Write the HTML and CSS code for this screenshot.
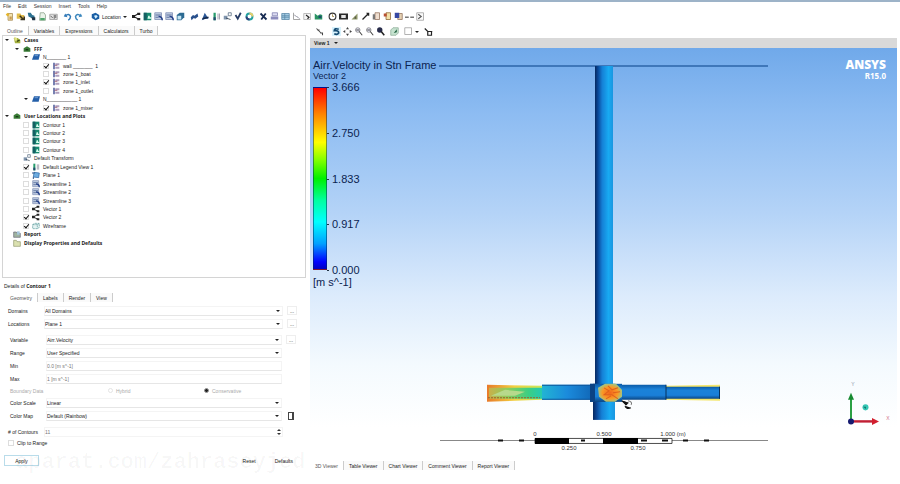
FILE: index.html
```html
<!DOCTYPE html>
<html lang="en">

<head>
    <meta charset="UTF-8">
    <meta name="viewport" content="width=device-width, initial-scale=1.0">
    <title>CFD-Post</title>
    <link rel="stylesheet" href="styles.css">
</head>

<body>
    <!-- Shared icons -->
    <svg class="sprite" aria-hidden="true">
        <symbol id="i-new" viewBox="0 0 12 12"><path d="M4 2h6v9H4z" fill="#f3e3b0" stroke="#a58a52"/><path d="M1 3l3-2 2 3-3 2z" fill="#e5b52c"/><path d="M6 6h3v4H6z" fill="#c99a52"/></symbol>
        <symbol id="i-open" viewBox="0 0 12 12"><path d="M1 2h5l1 2h4v5H1z" fill="#e2bd4c"/><path d="M5 5l5 5M6 10h5V6" stroke="#3b3420" stroke-width="2" fill="none"/></symbol>
        <symbol id="i-load" viewBox="0 0 12 12"><path d="M1 1h4l2 3 3 1v3H6L2 6z" fill="#2d7292"/><path d="M6 7h5v4H7z" fill="#1f3345"/></symbol>
        <symbol id="i-page" viewBox="0 0 12 12"><path d="M3 1h5l2 3v7H2z" fill="#e9f2e8" stroke="#8ba08b"/><path d="M3 8h6v3H3z" fill="#4fa66b"/></symbol>
        <symbol id="i-mail" viewBox="0 0 12 12"><path d="M1 3h10v7H1z" fill="#e0e0e0" stroke="#999"/><path d="M2 5l3 3M7 4v5M9 4v4" stroke="#444"/></symbol>
        <symbol id="i-undo" viewBox="0 0 12 12"><path d="M3 5q5-4 7 1q0 3-3 5" fill="none" stroke="#2f78b7" stroke-width="2"/><path d="M1 6l5 1-3-5z" fill="#2f78b7"/></symbol>
        <symbol id="i-redo" viewBox="0 0 12 12"><path d="M9 5q-5-4-7 1q0 3 3 5" fill="none" stroke="#3a86bd" stroke-width="2"/><path d="M11 6l-5 1 3-5z" fill="#3a86bd"/></symbol>
        <symbol id="i-location" viewBox="0 0 12 12"><path d="M1 3l5-2 5 3v5l-5 2-5-3z" fill="#1b5fa5"/><path d="M4 5l3-1 2 2-3 3z" fill="#d4efff"/></symbol>
        <symbol id="i-vector" viewBox="0 0 12 12"><path d="M2 6l7-4M2 6l8 4" stroke="#222" stroke-width="1.4"/><path d="M0 4h4v4H0zM7 1h4v3H7zM7 8h4v3H7z" fill="#222"/></symbol>
        <symbol id="i-contour" viewBox="0 0 12 12"><path d="M1 1h10v10H1z" fill="#198a70"/><path d="M1 1h4v10H1z" fill="#155f63"/><path d="M7 5h2v2h2v2H6z" fill="#d8fff0"/></symbol>
        <symbol id="i-stream" viewBox="0 0 12 12"><path d="M1 1h9v9H1z" fill="#c3cfe4" stroke="#7a8ab0"/><path d="M2 4h7M2 7h4" stroke="#3e5487"/><path d="M6 6q5 0 5 5" fill="none" stroke="#27428a" stroke-width="2"/></symbol>
        <symbol id="i-volume" viewBox="0 0 12 12"><path d="M1 4l4-3h6v6l-4 4H1z" fill="#2c6a92"/><path d="M2 5h5v5H2z" fill="#c5e5f3"/></symbol>
        <symbol id="i-text" viewBox="0 0 12 12"><path d="M1 7l3-3 2 1 4-3 1 4-4 3-2-1-3 3z" fill="#28508c"/></symbol>
        <symbol id="i-coord" viewBox="0 0 12 12"><path d="M5 1l5 8-4 0-5 2z" fill="#2a5796"/><path d="M2 9l8-2" stroke="#14284a" stroke-width="2"/></symbol>
        <symbol id="i-legend" viewBox="0 0 12 12"><path d="M2 1h3v10H2z" fill="#289d6d"/><path d="M2 7h3v4H2z" fill="#23476e"/><path d="M8 2v8M10 2v8" stroke="#889"/></symbol>
        <symbol id="i-transform" viewBox="0 0 12 12"><path d="M1 5h5v5H1z" fill="#8095ad"/><path d="M7 1h4v4H7z" fill="none" stroke="#52667c"/><path d="M4 8l6 2" stroke="#234"/></symbol>
        <symbol id="i-check" viewBox="0 0 12 12"><path d="M2 4l3 5 4-8" fill="none" stroke="#263b63" stroke-width="2.4"/></symbol>
        <symbol id="i-color" viewBox="0 0 12 12"><circle cx="6" cy="6" r="4" fill="none" stroke="#22a0a0" stroke-width="2.5"/><path d="M6 2a4 4 0 0 1 4 4" fill="none" stroke="#e8d06b" stroke-width="2.5"/><path d="M2 6a4 4 0 0 0 4 4" fill="none" stroke="#31407b" stroke-width="2.5"/></symbol>
        <symbol id="i-cross" viewBox="0 0 12 12"><path d="M2 2l8 8M9 2l-6 8" stroke="#182c52" stroke-width="2.4"/></symbol>
        <symbol id="i-print" viewBox="0 0 12 12"><path d="M3 1h7v4H3z" fill="#dcdcf1" stroke="#7d7dad"/><path d="M1 6h10v4H1z" fill="#8d8dbd"/></symbol>
        <symbol id="i-table" viewBox="0 0 12 12"><path d="M1 2h10v8H1z" fill="#a5cce3" stroke="#5886a5"/><path d="M1 5h10M1 7h10M5 2v8" stroke="#5886a5"/></symbol>
        <symbol id="i-chart" viewBox="0 0 12 12"><path d="M2 1v9h9" fill="none" stroke="#888"/><path d="M3 4l3 2 2 1 2 2" fill="none" stroke="#778"/></symbol>
        <symbol id="i-note" viewBox="0 0 12 12"><path d="M1 2h9v8H1z" fill="#f4f4f4" stroke="#aaa"/><path d="M4 4l4 3-2 2" fill="none" stroke="#222" stroke-width="1.5"/></symbol>
        <symbol id="i-figure" viewBox="0 0 12 12"><path d="M1 2l4 3 3-2 3 1v6H1z" fill="#2b9564"/><path d="M6 5h4v3H6z" fill="#1c4e6b"/></symbol>
        <symbol id="i-clock" viewBox="0 0 12 12"><circle cx="6" cy="6" r="4.5" fill="#fff" stroke="#333" stroke-width="1.5"/><path d="M6 3v3h2" stroke="#997b2f" fill="none"/></symbol>
        <symbol id="i-film" viewBox="0 0 12 12"><path d="M0 2h12v8H0z" fill="#2b2b2b"/><path d="M3 4h6v4H3z" fill="#e9e9e9"/></symbol>
        <symbol id="i-ruler" viewBox="0 0 12 12"><path d="M2 10h8V2z" fill="#8e9668"/><path d="M7 6v3" stroke="#333"/></symbol>
        <symbol id="i-probe" viewBox="0 0 12 12"><path d="M2 10l7-7" stroke="#222" stroke-width="1.6"/><path d="M7 1h4v4H9z" fill="#222"/></symbol>
        <symbol id="i-case-a" viewBox="0 0 12 12"><path d="M4 1h6v9H4z" fill="#f0dfd0" stroke="#906f5a"/><path d="M1 3h3v7H1z" fill="#777"/></symbol>
        <symbol id="i-case-b" viewBox="0 0 12 12"><path d="M4 1h6v9H4z" fill="#f2e0a8" stroke="#8b6430"/><path d="M1 2h4v4H1z" fill="#b85032"/></symbol>
        <symbol id="i-case-c" viewBox="0 0 12 12"><path d="M5 2h6v8H5z" fill="#e4d1b2" stroke="#906f5a"/><path d="M1 1h6v7H1z" fill="#3547a3"/></symbol>
        <symbol id="i-link" viewBox="0 0 12 12"><path d="M0 6h5v2H0zM7 6h5v2H7z" fill="#777"/></symbol>
        <symbol id="i-script" viewBox="0 0 12 12"><path d="M1 1h9v10H1z" fill="#fafafa" stroke="#999"/><path d="M3 3l4 3-4 3" fill="none" stroke="#555" stroke-width="1.4"/></symbol>
        <symbol id="i-pick" viewBox="0 0 12 12"><path d="M2 2l6 6M3 4h3M7 8h3v3" fill="none" stroke="#444" stroke-width="1.4"/></symbol>
        <symbol id="i-rotate" viewBox="0 0 12 12"><rect width="12" height="12" fill="#d9f2fc"/><path d="M9 3q-6-2-6 2q6-1 6 3q-2 3-6 1" fill="none" stroke="#174d74" stroke-width="2.2"/></symbol>
        <symbol id="i-pan" viewBox="0 0 12 12"><path d="M6 0l2 3H4zM6 12l2-3H4zM0 6l3-2v4zM12 6L9 4v4z" fill="#444"/></symbol>
        <symbol id="i-zoom" viewBox="0 0 12 12"><circle cx="5" cy="4" r="3" fill="#eef" stroke="#777"/><path d="M3 4h4M7 6l4 5" stroke="#444" stroke-width="1.4"/></symbol>
        <symbol id="i-fit" viewBox="0 0 12 12"><circle cx="5" cy="4" r="3.6" fill="#272b4a"/><path d="M7 6l4 5" stroke="#222" stroke-width="2"/></symbol>
        <symbol id="i-high" viewBox="0 0 12 12"><path d="M1 4l3-3h7v7l-3 3H1z" fill="#c6e2cf" stroke="#8bab96"/><path d="M5 8l4-5v4z" fill="#185c3a"/></symbol>
        <symbol id="i-view" viewBox="0 0 12 12"><path d="M1 1h9v9H1z" fill="#fff" stroke="#999"/></symbol>
        <symbol id="i-sync" viewBox="0 0 12 12"><path d="M1 2l4 4h6M5 6v5h5V6" fill="none" stroke="#222" stroke-width="1.6"/></symbol>
        <symbol id="i-cases" viewBox="0 0 12 12"><path d="M1 3h6l4 3v5H3z" fill="#a2ae3c"/><path d="M2 1l4 2v4H2z" fill="#dfe087"/><path d="M6 8l4-2" stroke="#394a12" stroke-width="2"/></symbol>
        <symbol id="i-fff" viewBox="0 0 12 12"><path d="M1 5l5-3 5 3v5H1z" fill="#397b35"/><path d="M4 6h4v2H4z" fill="#173b15"/></symbol>
        <symbol id="i-domain" viewBox="0 0 12 12"><path d="M3 2h9l-2 8H0z" fill="#245fa9"/><path d="M4 4h5" stroke="#8ebae8"/></symbol>
        <symbol id="i-boundary" viewBox="0 0 12 12"><path d="M2 1h2v10H2z" fill="#33418b"/><path d="M5 2h6v3H5zM5 7h6v3H5z" fill="#ae9fbf"/><path d="M4 5h4" stroke="#8b3049"/></symbol>
        <symbol id="i-plane" viewBox="0 0 12 12"><path d="M3 2l8 1-1 7-8-1z" fill="#6eaddf" stroke="#235fa1"/><path d="M0 3h4M2 9v3" stroke="#234c81" stroke-width="1.4"/></symbol>
        <symbol id="i-wire" viewBox="0 0 12 12"><path d="M1 4l3-2h7v6l-3 2H1zM1 4h7v6M8 4l3-2" fill="#e5f3f3" stroke="#5c9c9c" stroke-dasharray="3 1"/></symbol>
        <symbol id="i-report" viewBox="0 0 12 12"><path d="M1 3h4l1 2h5v6H1z" fill="#9fb3a0" stroke="#667"/><path d="M6 2h4v5H6z" fill="#a5c6dc"/></symbol>
        <symbol id="i-folder" viewBox="0 0 12 12"><path d="M1 2h4l1 2h5v7H1z" fill="#dbe1b0" stroke="#8e966a"/></symbol>
    </svg>

    <header>
        <nav class="menu">
            <a href="#">File</a><a href="#">Edit</a><a href="#">Session</a><a href="#">Insert</a><a href="#">Tools</a><a href="#">Help</a>
        </nav>
        <div class="toolbar" id="mainToolbar"></div>
    </header>

    <main>
        <section class="side">
            <div class="tabs">
                <button class="active">Outline</button><button>Variables</button><button>Expressions</button><button>Calculators</button><button>Turbo</button>
            </div>
            <ul class="tree" id="tree"></ul>

            <form class="details">
                <h2>Details of <b>Contour 1</b></h2>
                <div class="tabs sub">
                    <button type="button" class="active">Geometry</button><button type="button">Labels</button><button type="button">Render</button><button type="button">View</button>
                </div>
                <div class="row">
                    <label for="domains">Domains</label>
                    <span class="select"><select id="domains"><option>All Domains</option></select></span>
                    <button type="button" class="more">...</button>
                </div>
                <div class="row">
                    <label for="locations">Locations</label>
                    <span class="select"><select id="locations"><option>Plane 1</option></select></span>
                    <button type="button" class="more">...</button>
                </div>
                <div class="group">
                    <div class="row">
                        <label for="variable">Variable</label>
                        <span class="select"><select id="variable"><option>Airr.Velocity</option></select></span>
                        <button type="button" class="more">...</button>
                    </div>
                    <div class="row">
                        <label for="range">Range</label>
                        <span class="select"><select id="range"><option>User Specified</option></select></span>
                    </div>
                    <div class="row">
                        <label for="min">Min</label>
                        <input type="text" id="min" value="0.0 [m s^-1]">
                    </div>
                    <div class="row">
                        <label for="max">Max</label>
                        <input type="text" id="max" value="1 [m s^-1]">
                    </div>
                    <div class="row boundary">
                        <span>Boundary Data</span>
                        <label><input type="radio" name="data" disabled>Hybrid</label>
                        <label><input type="radio" name="data" checked disabled>Conservative</label>
                    </div>
                    <div class="row">
                        <label for="scale">Color Scale</label>
                        <span class="select"><select id="scale"><option>Linear</option></select></span>
                    </div>
                    <div class="row">
                        <label for="map">Color Map</label>
                        <span class="select"><select id="map"><option>Default (Rainbow)</option></select></span>
                        <button type="button" class="more map" aria-label="Edit color map"></button>
                    </div>
                </div>
                <div class="row count">
                    <label for="contours"># of Contours</label>
                    <span class="spin"><input type="text" id="contours" value="11"></span>
                </div>
                <label class="clip"><input type="checkbox">Clip to Range</label>
                <div class="actions">
                    <button type="button" class="apply">Apply</button>
                    <button type="button">Reset</button>
                    <button type="button">Defaults</button>
                    <span class="watermark">aparat.com/zahraseyjed</span>
                </div>
            </form>
        </section>

        <section class="viewer">
            <div class="toolbar" id="viewToolbar"></div>
            <div class="view-bar">View 1 <span class="caret"></span></div>
            <div class="viewport">
                <svg class="scene" viewBox="310 48 587 411" preserveAspectRatio="none">
                    <defs>
                        <linearGradient id="shaft">
                            <stop offset="0" stop-color="#06285f"/><stop offset=".18" stop-color="#0a4a9c"/>
                            <stop offset=".4" stop-color="#1580d6"/><stop offset=".75" stop-color="#18aaf2"/><stop offset="1" stop-color="#1a96e0"/>
                        </linearGradient>
                        <linearGradient id="shade" x1="0" y1="0" x2="0" y2="1">
                            <stop offset="0" stop-color="#0b5ba8"/><stop offset=".3" stop-color="#1a82d8"/>
                            <stop offset=".7" stop-color="#1a7fd8"/><stop offset="1" stop-color="#0a4480"/>
                        </linearGradient>
                        <linearGradient id="tip">
                            <stop offset="0" stop-color="#c9b04a"/><stop offset=".35" stop-color="#8ccd5c"/>
                            <stop offset=".75" stop-color="#3bcf84"/><stop offset="1" stop-color="#25c9b1"/>
                        </linearGradient>
                        <linearGradient id="arm">
                            <stop offset="0" stop-color="#22b4d4"/><stop offset=".5" stop-color="#1b8bdc"/><stop offset="1" stop-color="#1168b8"/>
                        </linearGradient>
                        <linearGradient id="edge">
                            <stop offset="0" stop-color="#e87a2a"/><stop offset=".5" stop-color="#f2d040"/><stop offset="1" stop-color="#c8e85a"/>
                        </linearGradient>
                        <radialGradient id="jet">
                            <stop offset="0" stop-color="#f2641c"/><stop offset=".65" stop-color="#fa9a25"/><stop offset="1" stop-color="#a9c27a"/>
                        </radialGradient>
                    </defs>
                    <path d="M439 66H768" stroke="#2c64a9" stroke-width="1.6"/>

                    <!-- impeller -->
                    <path d="M595 66h18v318h-18z" fill="url(#shaft)"/>
                    <path d="M487 384l55 1v14l-55 2z" fill="url(#edge)"/>
                    <path d="M489 387l53 0v11l-53 0z" fill="url(#tip)"/>
                    <path d="M491 395l14-6 20 2-10 4z" fill="#b7d98c"/>
                    <path d="M488 397h52" stroke="#98632c" stroke-dasharray="2 1"/>
                    <path d="M542 384h50v15h-50z" fill="url(#arm)"/>
                    <path d="M542 384.500h50M542 398.500h50" stroke="#0d559a"/>
                    <path d="M620 384h46v15h-46z" fill="url(#shade)"/>
                    <path d="M666 385l54-1v16l-54-1z" fill="#f4e66a"/>
                    <path d="M666 386h54v12h-54z" fill="url(#shade)"/>
                    <path d="M666 384v15M719.500 386v12" stroke="#06325f"/>
                    <path d="M593 383h22v36h-22z" fill="url(#shaft)"/>
                    <path d="M590 383h32v18h-32z" fill="url(#shade)"/>
                    <path d="M590 383h5v18h-5z" fill="#0b4384"/>
                    <path d="M598 387l7-4 11 0 6 6v7l-7 5h-9l-7-5z" fill="url(#jet)"/>
                    <path d="M604 387l5 3-5 4 8 0 6 4M608 385l4 4 6-2M613 392l7-1M606 398l5-3" fill="none" stroke="#e0601c"/>
                    <path d="M622 400l6 2-2 2zM625 405q1 4 6 2" fill="#111" stroke="#111"/>
                    <path d="M628 400q5 1 3 4" fill="none" stroke="#777"/>

                    <!-- scale bar -->
                    <path d="M440 439.500H768" stroke="#888" stroke-width="1"/>
                    <path d="M498 438.500h5v2h-5zM519 438.500h5v2h-5zM683 438.500h5v2h-5zM704 438.500h5v2h-5z" fill="#111"/>
                    <path d="M535 437.500h137v5H535z" fill="#fff" stroke="#222" stroke-width=".8"/>
                    <path d="M535 437h34v6h-34zM603 437h35v6h-35z" fill="#000"/>
                    <path d="M581 438.500h4v2h-4zM641 438.500h6v2h-6zM662 438.500h6v2h-6z" fill="#111"/>
                    <g class="scale-text">
                        <text x="535" y="435">0</text>
                        <text x="604" y="435">0.500</text>
                        <text x="673" y="435">1.000  (m)</text>
                        <text x="569" y="449">0.250</text>
                        <text x="638" y="449">0.750</text>
                    </g>

                    <!-- axis triad -->
                    <path d="M851 420V397" stroke="#2ba044" stroke-width="2"/>
                    <path d="M848 399l3-7 3 7z" fill="#168a30"/>
                    <path d="M851 420.500h23" stroke="#c11f34" stroke-width="2.400"/>
                    <path d="M872 417l7 3.500-7 3.500z" fill="#d21f2f"/>
                    <circle cx="851" cy="420.500" r="3" fill="#161a70"/>
                    <circle cx="865.500" cy="406.500" r="3" fill="#35c6b4"/>
                    <path d="M863 406h3v2z" fill="#14776f"/>
                    <g class="axis-text">
                        <text x="853" y="385">Y</text>
                        <text x="888" y="419" class="x">X</text>
                    </g>
                </svg>
                <div class="legend">
                    <h1>Airr.Velocity in Stn Frame</h1>
                    <p>Vector 2</p>
                    <div class="scale">
                        <div class="ramp"></div>
                        <ol>
                            <li>3.666</li>
                            <li>2.750</li>
                            <li>1.833</li>
                            <li>0.917</li>
                            <li>0.000</li>
                        </ol>
                    </div>
                    <span class="unit">[m s^-1]</span>
                </div>
                <div class="brand"><strong>ANSYS</strong><span>R15.0</span></div>
            </div>
            <div class="tabs bottom">
                <button class="active">3D Viewer</button><button>Table Viewer</button><button>Chart Viewer</button><button>Comment Viewer</button><button>Report Viewer</button>
            </div>
        </section>
    </main>

    <script src="script.js"></script>
</body>

</html>
```
FILE: styles.css
```css
* {
    box-sizing: border-box;
}

body {
    margin: 0;
    min-height: 100vh;
    display: flex;
    flex-direction: column;
    font: 5px/8px "Liberation Sans", Arial, sans-serif;
    color: #222;
    background: #fff;
    border-top: 2px solid #9db3c8;
}

button,
input,
select {
    font: inherit;
    color: inherit;
    margin: 0;
    padding: 0;
    border: none;
    background: none;
}

h1,
h2,
p,
ul,
ol {
    margin: 0;
    padding: 0;
    list-style: none;
    font-size: inherit;
    font-weight: normal;
}

.sprite {
    position: absolute;
    width: 0;
    height: 0;
}

.icon {
    width: 9px;
    height: 9px;
    display: block;
}

.caret {
    display: inline-block;
    border: 2px solid transparent;
    border-top-color: #222;
    border-bottom: none;
}

/* Menu and toolbars */
.menu {
    display: flex;
    gap: 7px;
    padding: 0 3px;
}

.menu a {
    color: #333;
    text-decoration: none;
}

.toolbar {
    display: flex;
    align-items: center;
    height: 13px;
    gap: 2px;
    padding-left: 5px;
}

.toolbar button {
    display: flex;
    align-items: center;
    gap: 2px;
}

.toolbar .sep {
    width: 1px;
}

.toolbar .sep.wide {
    width: 4px;
}

main {
    flex: 1;
    display: flex;
    gap: 4px;
}

/* Left panel */
.side {
    width: 34%;
    display: flex;
    flex-direction: column;
}

.tabs {
    display: flex;
    padding-left: 2px;
}

.tabs button {
    padding: 0 5px;
    height: 9px;
    border-right: 1px solid #ccc;
    background: #fafafa;
    white-space: nowrap;
}

.side > .tabs {
    padding-top: 3px;
}

.tabs .active {
    background: #fff;
    color: #555;
}

.tree {
    margin-left: 2px;
    height: 243px;
    padding: 0 0 30px;
    border: 1px solid #d4d4d4;
    display: grid;
    grid-auto-rows: 1fr;
}

.tree li {
    display: flex;
    align-items: center;
    gap: 2px;
    white-space: pre;
}

.tree .l1 {
    padding-left: 10px;
}

.tree .l2 {
    padding-left: 19px;
}

.tree .l3 {
    padding-left: 39px;
}

.tree b,
.details h2 b {
    font-family: "Noto Sans", sans-serif;
}

.tree .icon {
    width: 8px;
    height: 8px;
    margin-right: 1px;
}

.tree .mark {
    width: 8px;
    display: flex;
    justify-content: center;
}

input[type="checkbox"] {
    appearance: none;
    width: 6px;
    height: 6px;
    border: 1px solid #ddd;
    background: #fff;
}

input[type="checkbox"]:checked::before {
    content: "";
    display: block;
    width: 2px;
    height: 4px;
    margin: -1px 0 0 1px;
    border: solid #111;
    border-width: 0 1px 1px 0;
    transform: rotate(40deg);
}

/* Details form */
.details {
    padding: 4px 6px 0 4px;
    display: flex;
    flex-direction: column;
}

.tabs.sub {
    margin: 3px 0 2px;
    padding-left: 1px;
}

.row {
    display: flex;
    align-items: center;
    height: 13px;
    padding-left: 4px;
}

.row > label:first-child {
    width: 36px;
}

.group {
    margin: 3px 0;
    padding-left: 2px;
}

.group .select,
.group .row > input {
    margin-right: 18px;
}

.select,
.spin,
.row > input {
    position: relative;
    flex: 1;
    height: 10px;
    border: 1px solid #f4f4f4;
    border-bottom-color: #e6e6e6;
    margin-right: 17px;
}

.select select {
    appearance: none;
    display: block;
    width: 100%;
    height: 8px;
}

.select::after {
    content: "";
    position: absolute;
    right: 2px;
    top: 3px;
    border: 2px solid transparent;
    border-top-color: #222;
    border-bottom: none;
}

.row .select:has(+ .more) {
    margin-right: 4px;
}

.more {
    width: 10px;
    height: 9px;
    margin-right: 3px;
    border: 1px solid #eee;
    line-height: 4px;
}

.group .more {
    margin-right: 4px;
}

.more.map {
    width: 6px;
    height: 8px;
    margin: 0 6px 0 2px;
    border: 1px solid #444;
    border-right-width: 2px;
}

.row > input,
.spin input {
    color: #777;
}

.boundary {
    height: 11px;
    color: #aaa;
}

.boundary span {
    flex: 98;
}

.boundary label,
.boundary > label:first-child {
    flex: 96;
    display: flex;
    align-items: center;
    gap: 3px;
}

.boundary input {
    appearance: none;
    width: 5px;
    height: 5px;
    border: 1px solid #e4e4e4;
    border-radius: 50%;
}

.boundary input:checked {
    border: 1px solid #999;
    background: #222;
}

.spin {
    border-color: #f4f4f4;
}

.spin input {
    display: block;
    width: 90%;
    height: 8px;
}

.spin::before,
.spin::after {
    content: "";
    position: absolute;
    right: 1px;
    top: 1px;
    border: 2px solid transparent;
    border-bottom-color: #333;
    border-top: none;
}

.spin::after {
    top: 5px;
    border-top: 2px solid #333;
    border-bottom: none;
}

.clip {
    display: flex;
    align-items: center;
    gap: 3px;
    padding-left: 4px;
    height: 9px;
}

.actions {
    position: relative;
    display: flex;
    gap: 19px;
    margin-top: 8px;
    padding-right: 7px;
    height: 11px;
    align-items: center;
}

.apply {
    width: 35px;
    height: 11px;
    margin-right: auto;
    border: 1px solid #b9dcea;
}

.watermark {
    position: absolute;
    left: 11px;
    top: 1px;
    font: bold 22px/14px "Liberation Mono", monospace;
    color: rgba(0, 0, 0, 0.03);
    pointer-events: none;
}

/* 3D viewer */
.viewer {
    flex: 1;
    display: flex;
    flex-direction: column;
    padding: 2px 3px 14px 0;
}

.view-bar {
    height: 10px;
    padding: 1px 4px;
    background: #d9d9d9;
    font-weight: bold;
}

.view-bar .caret {
    margin: 0 0 1px 3px;
}

.viewport {
    position: relative;
    flex: 1;
    display: flex;
    justify-content: space-between;
    align-items: flex-start;
    padding: 11px 11px 0 3px;
    background: linear-gradient(#70a9ea, #8dbcf2 16%, #b4d3f7 40%, #dcebfc 60%, #f4fafe 77%, #fff 92%);
}

.scene {
    position: absolute;
    inset: 0;
    width: 100%;
    height: 100%;
}

.scale-text {
    font-size: 6px;
    text-anchor: middle;
    fill: #333;
    white-space: pre;
}

.axis-text {
    font-size: 5px;
    text-anchor: middle;
    fill: #8a93a8;
}

.axis-text .x {
    fill: #d0708a;
}

.legend {
    position: relative;
    color: #0b2350;
    font-size: 11px;
    line-height: 12px;
}

.legend h1 {
    font-size: 11px;
    line-height: 13px;
}

.legend p {
    font-size: 9px;
    line-height: 9px;
}

.scale {
    display: flex;
    gap: 5px;
}

.ramp {
    width: 14px;
    margin: 6px 0;
    border: 1px solid rgba(0, 40, 90, 0.5);
    background: linear-gradient(#f00, #ff8000 14%, #ff0 30%, #80ff00 40%, #00f000 50%, #00ffa0 62%, #0ff 74%, #00a0ff 86%, #00f 96%, #0000c0);
}

.scale ol {
    height: 195px;
    display: flex;
    flex-direction: column;
    justify-content: space-between;
}

.scale li {
    position: relative;
}

.scale li::before {
    content: "";
    position: absolute;
    left: -5px;
    top: 6px;
    width: 2px;
    height: 1px;
    background: #234;
}

.brand {
    position: relative;
    display: flex;
    flex-direction: column;
    align-items: flex-end;
    color: #fff;
    font: bold 12px/12px "Noto Sans", sans-serif;
}

.brand span {
    font-size: 8px;
    line-height: 9px;
}

.tabs.bottom {
    padding: 1px 0 0;
}
```
FILE: script.js
```js
function icon(name) {
    return `<svg class="icon"><use href="#i-${name}"/></svg>`;
}

// '|' is a narrow gap, '||' a wide one
function fillToolbar(id, items) {
    document.getElementById(id).innerHTML = items.map(item => {
        if (item === '|') return '<span class="sep"></span>';
        if (item === '||') return '<span class="sep wide"></span>';
        if (item === 'location') return `<button>${icon(item)}Location <span class="caret"></span></button>`;
        if (item === 'view') return `<button aria-label="view">${icon(item)}<span class="caret"></span></button>`;
        return `<button aria-label="${item}">${icon(item)}</button>`;
    }).join('');
}

fillToolbar('mainToolbar', ['new', 'open', 'load', 'page', 'mail', '|', 'undo', 'redo', '||', 'location', '|',
    'vector', 'contour', 'stream', 'stream', 'volume', '|', 'text', 'coord', 'legend', 'transform', 'check', 'color', '|',
    'cross', 'print', 'table', 'chart', 'note', 'figure', '|',
    'clock', 'film', 'ruler', 'probe', 'case-a', 'case-b', 'case-c', 'link', 'script']);

fillToolbar('viewToolbar', ['pick', '||', 'rotate', 'pan', 'zoom', 'zoom', 'fit', '|', 'high', '|', 'view', '|', 'sync']);

// level, mark (open / on / off / none), icon, text
const rows = [
    [0, 'open', 'cases', 'Cases'],
    [1, 'open', 'fff', 'FFF'],
    [2, 'open', 'domain', 'N_______ 1'],
    [3, 'on', 'boundary', 'wall _______  1'],
    [3, 'off', 'boundary', 'zone 1_boat'],
    [3, 'on', 'boundary', 'zone 1_inlet'],
    [3, 'off', 'boundary', 'zone 1_outlet'],
    [2, 'open', 'domain', 'N___________ 1'],
    [3, 'on', 'boundary', 'zone 1_mixer'],
    [0, 'open', 'fff', 'User Locations and Plots'],
    [2, 'off', 'contour', 'Contour 1'],
    [2, 'off', 'contour', 'Contour 2'],
    [2, 'off', 'contour', 'Contour 3'],
    [2, 'off', 'contour', 'Contour 4'],
    [1, 'none', 'transform', 'Default Transform'],
    [2, 'on', 'legend', 'Default Legend View 1'],
    [2, 'off', 'plane', 'Plane 1'],
    [2, 'off', 'stream', 'Streamline 1'],
    [2, 'off', 'stream', 'Streamline 2'],
    [2, 'off', 'stream', 'Streamline 3'],
    [2, 'off', 'vector', 'Vector 1'],
    [2, 'on', 'vector', 'Vector 2'],
    [2, 'on', 'wire', 'Wireframe'],
    [0, 'none', 'report', 'Report'],
    [0, 'none', 'folder', 'Display Properties and Defaults']
];

document.getElementById('tree').innerHTML = rows.map(([level, mark, name, text], i) => {
    let box = '';
    if (mark === 'open') box = '<span class="caret"></span>';
    if (mark === 'on' || mark === 'off') box = `<input type="checkbox" id="row${i}" ${mark === 'on' ? 'checked' : ''}>`;
    const label = box.startsWith('<input') ? `<label for="row${i}">${text}</label>`
        : level === 0 || text === 'FFF' ? `<b>${text}</b>` : `<span>${text}</span>`;
    return `<li class="l${level}"><span class="mark">${box}</span>${icon(name)}${label}</li>`;
}).join('');
```
